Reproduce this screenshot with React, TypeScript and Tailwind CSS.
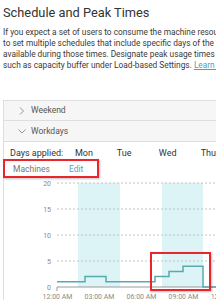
import React from 'react';

const hours = ['12:00 AM', '03:00 AM', '06:00 AM', '09:00 AM', '12:00 PM'];

function Chevron({ open }: { open: boolean }) {
  return open ? (
    <svg width="8" height="8" viewBox="0 0 8 8" className="shrink-0">
      <path d="M0.5 2.5 L4 6 L7.5 2.5" fill="none" stroke="#8a8a8a" strokeWidth="0.9" />
    </svg>
  ) : (
    <svg width="8" height="8" viewBox="0 0 8 8" className="shrink-0">
      <path d="M2 0.5 L5.5 4 L2 7.5" fill="none" stroke="#8a8a8a" strokeWidth="0.9" />
    </svg>
  );
}

function PeakChart() {
  const yTicks = [20, 15, 10, 5, 0];
  const y = (v: number) => 286 - v * 5.2;
  const line = `M57 ${y(1)} H85 V${y(2)} H106 V${y(1)} H155 V${y(2)} H169 V${y(3)} H183 V${y(4)} H203 V${y(0)} H216`;
  return (
    <svg width="212" height="124" viewBox="4 176 212 124" className="block">
      <rect x="78" y="182" width="42" height="104" fill="#dcf4f6" />
      <rect x="162" y="182" width="41" height="104" fill="#dcf4f6" />
      {yTicks.map((t) => (
        <g key={t}>
          <text x="51" y={y(t) + 2.5} fontSize="7" textAnchor="end" fill="#8a8a8a" fontFamily="Roboto, sans-serif">
            {t}
          </text>
          {t > 0 && (
            <line x1="57" x2="216" y1={y(t)} y2={y(t)} stroke="#b5b5b5" strokeWidth="0.8" strokeDasharray="2 2" />
          )}
        </g>
      ))}
      <line x1="57" x2="216" y1="286" y2="286" stroke="#9a9a9a" strokeWidth="1" />
      <line x1="57" x2="57" y1="286" y2="290" stroke="#9a9a9a" strokeWidth="1" />
      <path d={line} fill="none" stroke="#58a9b1" strokeWidth="1.5" />
      {hours.map((h, i) => (
        <text
          key={h}
          x={57.5 + i * 42}
          y="297.5"
          fontSize="7"
          textAnchor="middle"
          fill="#8a8a8a"
          fontFamily="Roboto, sans-serif"
        >
          {h}
        </text>
      ))}
    </svg>
  );
}

export default function App() {
  return (
    <div className="relative w-[216px] h-[300px] overflow-hidden bg-white font-['Roboto',sans-serif]">
      <div className="pl-[3px] pt-[5px] text-[12.8px] leading-[16px] text-[#333] whitespace-nowrap">
        Schedule and Peak Times
      </div>

      <div className="mt-[6px] pl-[3px] text-[8.3px] leading-[11px] text-[#3a3a3a] whitespace-nowrap">
        <div>If you expect a set of users to consume the machine resources</div>
        <div>to set multiple schedules that include specific days of the week</div>
        <div>available during those times. Designate peak usage times for</div>
        <div>
          such as capacity buffer under Load-based Settings.{' '}
          <span className="text-[#4a9fbf] underline">Learn more</span>
        </div>
      </div>

      <div className="mt-[29px] ml-[3px] border-t border-[#dedede]">
        <div className="h-[20px] flex items-center gap-[5px] pl-[14px] bg-[#f6f6f6] border-b border-l border-[#dedede] text-[8.5px] text-[#555]">
          <Chevron open={false} />
          <span>Weekend</span>
        </div>
        <div className="h-[21px] flex items-center gap-[5px] pl-[14px] bg-[#f6f6f6] border-b border-l border-[#dedede] text-[8.5px] text-[#555]">
          <Chevron open={true} />
          <span>Workdays</span>
        </div>

        <div className="border-l border-[#dedede] h-[159px]">
          <div className="flex items-center h-[19px] pt-[4px] text-[9px] text-[#333] whitespace-nowrap">
            <span className="pl-[6px] w-[71px]">Days applied:</span>
            <span className="w-[42px]">Mon</span>
            <span className="w-[42px]">Tue</span>
            <span className="w-[42px]">Wed</span>
            <span>Thu</span>
          </div>
          <div className="flex items-center h-[16px] text-[8.5px] whitespace-nowrap">
            <span className="pl-[9px] w-[65px] text-[#777]">Machines</span>
            <span className="text-[#5a9fc4]">Edit</span>
          </div>
          <PeakChart />
        </div>
      </div>

      <div className="absolute left-[3px] top-[159px] w-[96px] h-[19px] border-2 border-[#e8262b] shadow-[1px_1px_2px_rgba(0,0,0,0.25)]" />
      <div className="absolute left-[150px] top-[252px] w-[61px] h-[39px] border-2 border-[#e8262b] shadow-[1px_1px_2px_rgba(0,0,0,0.25)]" />
    </div>
  );
}
